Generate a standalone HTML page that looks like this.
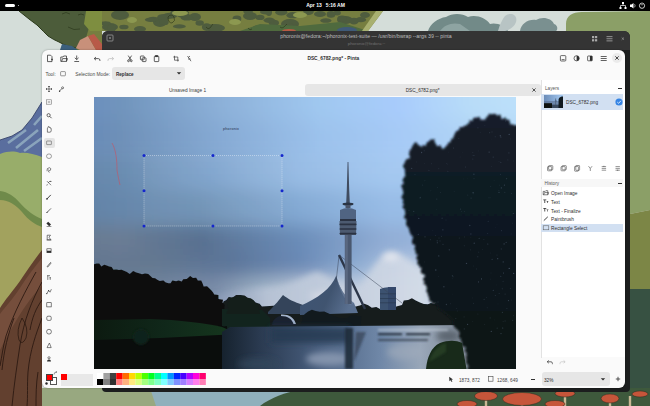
<!DOCTYPE html>
<html><head><meta charset="utf-8">
<style>
*{margin:0;padding:0;box-sizing:border-box}
html,body{width:650px;height:406px;overflow:hidden;background:#d3dcd8}
body{position:relative;font-family:"Liberation Sans",sans-serif;color:#2e2e2e}
.a{position:absolute}
svg{display:block}
.t{position:absolute;white-space:nowrap;line-height:1}
</style></head><body>
<!-- WALLPAPER -->
<svg class="a" style="left:0;top:0" width="650" height="406" viewBox="0 0 650 406">
<defs><filter id="wb"><feGaussianBlur stdDeviation="0.5"/></filter></defs>
<rect width="650" height="406" fill="#d4ddd9"/>
<path d="M20 11 L383 11 L368 31 L102 31 L102 50 L70 50 Z" fill="#767e40"/>
<ellipse cx="120" cy="15" rx="9" ry="5" fill="#4e5c3e"/>
<ellipse cx="110" cy="27" rx="8" ry="4" fill="#4e5c3e"/>
<ellipse cx="160" cy="22" rx="7" ry="5" fill="#4e5c3e"/>
<ellipse cx="195" cy="17" rx="6" ry="4" fill="#4e5c3e"/>
<ellipse cx="215" cy="28" rx="10" ry="4" fill="#4e5c3e"/>
<ellipse cx="250" cy="16" rx="7" ry="4" fill="#4e5c3e"/>
<ellipse cx="290" cy="24" rx="9" ry="5" fill="#4e5c3e"/>
<ellipse cx="320" cy="14" rx="6" ry="3" fill="#4e5c3e"/>
<ellipse cx="345" cy="20" rx="8" ry="4" fill="#4e5c3e"/>
<ellipse cx="365" cy="15" rx="5" ry="3" fill="#4e5c3e"/>
<ellipse cx="140" cy="29" rx="6" ry="3" fill="#4e5c3e"/>
<ellipse cx="270" cy="29" rx="10" ry="3" fill="#4e5c3e"/>
<ellipse cx="164.25044931481068" cy="21.884584505919037" rx="4.4798206661923174" ry="3.207840077192389" fill="#4e5c3e"/>
<ellipse cx="268.9444821091746" cy="12.310577184796262" rx="3.0526719662194965" ry="3.6749381641929197" fill="#4e5c3e"/>
<ellipse cx="170.02558386856208" cy="15.686619220933927" rx="6.982579342041851" ry="2.940527015044896" fill="#4e5c3e"/>
<ellipse cx="325.84459184408496" cy="20.527064173986698" rx="5.556272562176648" ry="2.301232848047048" fill="#4e5c3e"/>
<ellipse cx="271.4123777370009" cy="28.360906142865936" rx="5.092724841533205" ry="3.4825037124029805" fill="#4e5c3e"/>
<ellipse cx="281.28109834979" cy="12.280628764539946" rx="6.032920985147269" ry="3.1821991658626354" fill="#4e5c3e"/>
<ellipse cx="181.34226806924232" cy="11.620235029395" rx="6.462108947915782" ry="2.9454981773309337" fill="#4e5c3e"/>
<ellipse cx="294.0824594977668" cy="28.576256005109634" rx="5.85651793444481" ry="3.842197335167749" fill="#4e5c3e"/>
<ellipse cx="206.64011908020086" cy="27.018175419704566" rx="4.7784842242030425" ry="3.871173443409042" fill="#4e5c3e"/>
<ellipse cx="337.29399829127124" cy="12.949086194617545" rx="3.5438754408026756" ry="2.4339738824662747" fill="#4e5c3e"/>
<ellipse cx="360.6796375025148" cy="19.723237332548585" rx="5.506593163467215" ry="2.6020523968510108" fill="#4e5c3e"/>
<ellipse cx="236.95560563384606" cy="18.71732517689805" rx="4.403641955080721" ry="3.1701482148107267" fill="#4e5c3e"/>
<ellipse cx="257.7479841019537" cy="29.0840354169555" rx="5.727928546539866" ry="3.857891202400034" fill="#4e5c3e"/>
<ellipse cx="331.22815292712403" cy="30.819792897376303" rx="5.685094168650073" ry="2.3261992439421393" fill="#4e5c3e"/>
<ellipse cx="332.37213394139246" cy="30.292658946181227" rx="6.618783938048947" ry="3.1382150069486467" fill="#4e5c3e"/>
<ellipse cx="292.7305954470338" cy="15.222499673511965" rx="6.326431721093417" ry="3.1470647047025695" fill="#4e5c3e"/>
<ellipse cx="176.9385147362754" cy="12.269211542904587" rx="6.41576995369072" ry="3.9796120298431625" fill="#4e5c3e"/>
<ellipse cx="123.89988513962666" cy="27.011906425150038" rx="4.641847309383635" ry="2.301530748905619" fill="#4e5c3e"/>
<ellipse cx="179.3506366411468" cy="26.375837745546892" rx="6.491068098512805" ry="2.0883801222590868" fill="#4e5c3e"/>
<ellipse cx="265.92378270358836" cy="11.898804869920724" rx="5.873761909794065" ry="2.661908292038015" fill="#4e5c3e"/>
<ellipse cx="337.8444329567867" cy="30.612715136866793" rx="5.021681494592176" ry="3.997017890751553" fill="#4e5c3e"/>
<ellipse cx="183.61091443861153" cy="12.539414094108238" rx="5.399051235186403" ry="2.0627555243506355" fill="#4e5c3e"/>
<ellipse cx="153.29391123567325" cy="19.158722712339816" rx="5.441868491869366" ry="2.3123979820271297" fill="#4e5c3e"/>
<ellipse cx="111.45767267472513" cy="28.355580678554446" rx="4.255322079664367" ry="3.9173188528169103" fill="#4e5c3e"/>
<ellipse cx="342.09810318545243" cy="18.555784788243653" rx="4.841638531383619" ry="3.0401459691851276" fill="#4e5c3e"/>
<ellipse cx="273.8499539646863" cy="22.91300476803941" rx="5.2370442480615615" ry="3.240252270890524" fill="#4e5c3e"/>
<ellipse cx="353.9677389644701" cy="21.140536318913195" rx="4.724766213723731" ry="3.4406225042882768" fill="#4e5c3e"/>
<ellipse cx="164.1616172554917" cy="17.021737223482987" rx="6.911189265794541" ry="3.0422545865624118" fill="#4e5c3e"/>
<ellipse cx="248.0762262754528" cy="11.229149727284382" rx="4.6608413752155275" ry="3.159930427594131" fill="#4e5c3e"/>
<ellipse cx="105.41428038224183" cy="23.315958826125133" rx="5.528722141184462" ry="2.120161021255446" fill="#4e5c3e"/>
<ellipse cx="269.3820994329581" cy="20.325008593934157" rx="5.717125592152435" ry="2.7051539660820945" fill="#4e5c3e"/>
<ellipse cx="290.8765673287927" cy="25.760685785040685" rx="3.0887298759632396" ry="2.1211536072915944" fill="#4e5c3e"/>
<ellipse cx="282.5254835615917" cy="30.266111607725147" rx="4.00448911273388" ry="2.9126242592727585" fill="#4e5c3e"/>
<ellipse cx="260.0214064299521" cy="17.40050771496013" rx="4.455820357359828" ry="2.6253413223938216" fill="#4e5c3e"/>
<ellipse cx="199.6715733247776" cy="22.91243011715073" rx="4.201615893462357" ry="2.7543206826578337" fill="#4e5c3e"/>
<ellipse cx="308.51382135991264" cy="11.538424100186601" rx="5.277032008282329" ry="3.4703463633570193" fill="#4e5c3e"/>
<ellipse cx="183.7045077607251" cy="15.450756855863819" rx="6.215230681579653" ry="2.477390353795684" fill="#4e5c3e"/>
<ellipse cx="150.59647204784432" cy="19.70468641065642" rx="5.7922656266993995" ry="2.203683385263743" fill="#4e5c3e"/>
<ellipse cx="186.9308158477414" cy="17.675073008973506" rx="6.334155566229235" ry="2.876861465122774" fill="#4e5c3e"/>
<ellipse cx="330.99450237591935" cy="14.385684651128699" rx="4.346840940179523" ry="3.3004647525849897" fill="#4e5c3e"/>
<ellipse cx="180" cy="13" rx="8" ry="3" fill="#8c9850"/>
<ellipse cx="235" cy="22" rx="6" ry="3" fill="#8c9850"/>
<ellipse cx="300" cy="15" rx="7" ry="3" fill="#8c9850"/>
<ellipse cx="132" cy="20" rx="5" ry="3" fill="#8c9850"/>
<path d="M240 31 L260 24 L300 26 L340 22 L368 31 Z" fill="#4f6a3e"/>
<ellipse cx="347" cy="30" rx="10" ry="3" fill="#3f5a78"/>
<ellipse cx="289" cy="31" rx="7" ry="2" fill="#b85a44"/>
<path d="M376 11 L383 11 L368 31 L362 31 Z" fill="#a8b070"/>
<path d="M168 17 q3 -4 6 0 q2 4 -2 6 q-4 0 -4 -6" fill="none" stroke="#2a3418" stroke-width="0.6"/>
<path d="M206 27 q2 3 4 1 q2 -3 3 -4 M248 28 q2 3 4 1 M280 27 q2 2 4 0 q2 -2 3 -3" fill="none" stroke="#2a3418" stroke-width="0.6"/>
<path d="M19 11 Q30 20 37 25 Q44 32 48 36 Q54 40 59 42 Q64 45 68 46 L76 48 L86 38 L90 24 L88 11 Z" fill="#4c5c3a"/>
<path d="M19 11 Q30 20 37 25 Q44 32 48 36 Q54 40 59 42 Q64 45 68 46 L76 48" fill="none" stroke="#2c3a1c" stroke-width="1"/>
<path d="M68 27 q6 4 12 2 M62 14 q4 -3 8 0 M78 15 q3 -2 6 0" fill="none" stroke="#2c3a1c" stroke-width="0.7"/>
<path d="M86 11 L102 11 L102 31 L90 31 L84 24 Z" fill="#7e8e40"/>
<path d="M76 48 L80 40 L88 36 L96 50 L80 50 Z" fill="#c8907a"/>
<path d="M88 36 L94 34 L102 44 L102 50 L96 50 Z" fill="#b85a48"/>
<path d="M60 50 L62 44 L72 46 L78 50 Z" fill="#3b5f7c"/>
<path d="M428 31 C430 24 438 18 446 17 C452 13 462 13 468 17 C476 14 486 18 490 24 C496 22 506 26 508 31 Z" fill="#728a88"/>
<path d="M440 31 C444 25 452 22 460 24 L470 31 Z" fill="#8ea4a2"/>
<path d="M520 31 C521 24 528 19 536 20 C542 16 552 18 554 24 C558 25 558 30 556 31 Z" fill="#7a9090"/>
<path d="M505 16 C510 12 518 14 516 22 C514 28 508 30 505 31 L498 31 C500 24 502 20 505 16 Z" fill="#b8c4c4"/>
<path d="M566 31 L566 24 C566 16 572 12 582 12 L650 11 L650 210 L625 215 L625 31 Z" fill="#8b9f67"/>
<path d="M625 215 L650 210 L650 291 L625 291 Z" fill="#7c8646"/>
<path d="M625 289 L650 289 L650 406 L625 406 Z" fill="#375142"/>
<path d="M0 140 L12 136 L22 130 L32 118 L42 102 L42 160 L0 160 Z" fill="#5a6e9e"/>
<path d="M8 143 L26 130 M16 148 L38 130 M24 151 L42 138 M34 125 L42 116" stroke="#8aa4bc" stroke-width="2.6" fill="none"/>
<path d="M0 140 L12 136 L22 130 L32 118 L42 102" stroke="#2e3a60" stroke-width="0.8" fill="none"/>
<path d="M0 154 C8 151 14 151 20 153 C26 152 34 154 42 157 L42 232 L0 232 Z" fill="#98ad6a"/>
<path d="M0 191 C8 192 14 196 20 203 C26 210 34 216 42 219 L42 232 L0 232 Z" fill="#6f8a4a"/>
<path d="M0 200 C9 200 16 205 22 212 C28 220 36 225 42 227 L42 330 L0 330 Z" fill="#a2a25e"/>
<path d="M42 250 C34 260 26 272 20 281 C12 292 5 300 0 308 L0 406 L42 406 Z" fill="#62402f"/>
<path d="M42 258 C34 268 26 278 20 288 C12 300 6 306 0 314 L0 350 C10 330 24 305 42 285 Z" fill="#7e5442" opacity="0.7"/>
<path d="M36 272 C26 290 14 312 6 336 C3 346 2 356 0 366 M42 282 C32 300 24 320 20 345 C17 365 14 385 12 406 M42 318 C36 334 30 350 28 372 C27 386 28 396 27 406 M38 372 C36 384 36 396 36 406 M14 318 C8 334 4 350 2 370 M42 300 C36 308 32 318 30 330" stroke="#2c1a12" stroke-width="0.9" fill="none"/>
<path d="M22 318 q-6 12 -3 22 q3 6 7 -2 q3 -10 -4 -20" stroke="#2c1a12" stroke-width="0.8" fill="none"/>
<path d="M42 388 L170 388 L156 406 L42 406 Z" fill="#98a880"/>
<path d="M150 388 L310 388 C292 392 272 398 262 406 L156 406 Z" fill="#90b0bc"/>
<path d="M300 390 L650 388 L650 406 L260 406 C270 398 286 392 300 390 Z" fill="#3e593c"/>
<rect x="484.8" y="398" width="2.4" height="10" fill="#c9b894"/>
<rect x="520.8" y="404" width="2.4" height="10" fill="#c9b894"/>
<rect x="563.8" y="396" width="2.4" height="10" fill="#c9b894"/>
<rect x="608.8" y="402" width="2.4" height="10" fill="#c9b894"/>
<rect x="628.8" y="396" width="2.4" height="10" fill="#c9b894"/>
<ellipse cx="486" cy="396" rx="11.5" ry="4.5" fill="#c6553a" stroke="#2a2a20" stroke-width="0.5"/>
<ellipse cx="522" cy="399" rx="19.5" ry="6.5" fill="#c6553a" stroke="#2a2a20" stroke-width="0.5"/>
<ellipse cx="565" cy="393.5" rx="10" ry="3.5" fill="#c6553a" stroke="#2a2a20" stroke-width="0.5"/>
<ellipse cx="610" cy="398.5" rx="9" ry="4.5" fill="#c6553a" stroke="#2a2a20" stroke-width="0.5"/>
<ellipse cx="467" cy="404" rx="10" ry="3.5" fill="#c6553a" stroke="#2a2a20" stroke-width="0.5"/>
<ellipse cx="555" cy="404" rx="10" ry="3.5" fill="#c6553a" stroke="#2a2a20" stroke-width="0.5"/>
<ellipse cx="640" cy="394" rx="8" ry="3" fill="#c6553a" stroke="#2a2a20" stroke-width="0.5"/>
<path d="M614 391 q4 -6 10 -4" stroke="#2a3a28" stroke-width="0.8" fill="none"/>
</svg>
<!-- TOP BAR -->
<div class="a" style="left:0;top:0;width:650px;height:11px;background:#000"></div>
<!-- TERMINAL WINDOW -->
<div class="a" style="left:102px;top:31px;width:528px;height:361px;background:#1c1e1e;border-radius:6px 6px 4px 4px"></div>
<div class="a" style="left:102px;top:31px;width:528px;height:19px;background:#343434;border-radius:6px 6px 0 0"></div>
<!-- PINTA WINDOW -->
<div class="a" style="left:42px;top:50px;width:583px;height:338px;background:#fafafa;border-radius:6px;box-shadow:0 0 2px rgba(0,0,0,0.35)"></div>
<!-- PHOTO -->
<svg class="a" style="left:94px;top:97px" width="422" height="272" viewBox="0 0 422 272">
<defs><linearGradient id="g0" gradientUnits="userSpaceOnUse" x1="0" y1="0" x2="422" y2="0"><stop offset="0.000" stop-color="#6c90be"/><stop offset="0.062" stop-color="#7094bc"/><stop offset="0.299" stop-color="#8cb0d8"/><stop offset="0.536" stop-color="#a0c8f0"/><stop offset="0.725" stop-color="#a8ccfc"/><stop offset="0.891" stop-color="#b8dcf8"/><stop offset="1.000" stop-color="#bce0fa"/></linearGradient><linearGradient id="g1" gradientUnits="userSpaceOnUse" x1="0" y1="0" x2="422" y2="0"><stop offset="0.000" stop-color="#6a8cb8"/><stop offset="0.062" stop-color="#6e90b8"/><stop offset="0.299" stop-color="#86aad4"/><stop offset="0.536" stop-color="#9cc2ec"/><stop offset="0.725" stop-color="#a6caf6"/><stop offset="0.891" stop-color="#b0d4f6"/><stop offset="1.000" stop-color="#b4d8f8"/></linearGradient><linearGradient id="g2" gradientUnits="userSpaceOnUse" x1="0" y1="0" x2="422" y2="0"><stop offset="0.000" stop-color="#6688ac"/><stop offset="0.062" stop-color="#6a8cb0"/><stop offset="0.275" stop-color="#7ca2cc"/><stop offset="0.488" stop-color="#98bce4"/><stop offset="0.701" stop-color="#a4c8f0"/><stop offset="1.000" stop-color="#a8ccf2"/></linearGradient><linearGradient id="g3" gradientUnits="userSpaceOnUse" x1="0" y1="0" x2="422" y2="0"><stop offset="0.000" stop-color="#6484a8"/><stop offset="0.251" stop-color="#6c90b4"/><stop offset="0.488" stop-color="#84aad4"/><stop offset="0.701" stop-color="#98bce6"/><stop offset="1.000" stop-color="#9cc0e8"/></linearGradient><linearGradient id="g4" gradientUnits="userSpaceOnUse" x1="0" y1="0" x2="422" y2="0"><stop offset="0.000" stop-color="#687a92"/><stop offset="0.062" stop-color="#6a7c94"/><stop offset="0.251" stop-color="#587090"/><stop offset="0.488" stop-color="#6a8cb8"/><stop offset="0.690" stop-color="#90acd4"/><stop offset="0.796" stop-color="#98b4dc"/><stop offset="1.000" stop-color="#98b4dc"/></linearGradient><linearGradient id="g5" gradientUnits="userSpaceOnUse" x1="0" y1="0" x2="422" y2="0"><stop offset="0.000" stop-color="#627690"/><stop offset="0.133" stop-color="#647890"/><stop offset="0.322" stop-color="#5a7498"/><stop offset="0.488" stop-color="#6a88b4"/><stop offset="0.607" stop-color="#88a8d0"/><stop offset="0.725" stop-color="#b0c4e0"/><stop offset="1.000" stop-color="#b8cae2"/></linearGradient><linearGradient id="g6" gradientUnits="userSpaceOnUse" x1="0" y1="0" x2="422" y2="0"><stop offset="0.000" stop-color="#647890"/><stop offset="0.284" stop-color="#7a8ca8"/><stop offset="0.393" stop-color="#9cb0c4"/><stop offset="0.488" stop-color="#b8c6d8"/><stop offset="0.725" stop-color="#c8d4e4"/><stop offset="1.000" stop-color="#d0dcea"/></linearGradient><filter id="vb" x="-10%" y="-30%" width="120%" height="160%"><feGaussianBlur stdDeviation="3 9"/></filter><filter id="b6" x="-50%" y="-50%" width="200%" height="200%"><feGaussianBlur stdDeviation="6"/></filter><filter id="b3" x="-50%" y="-50%" width="200%" height="200%"><feGaussianBlur stdDeviation="3"/></filter><filter id="b1" x="-20%" y="-20%" width="140%" height="140%"><feGaussianBlur stdDeviation="1"/></filter><filter id="b04"><feGaussianBlur stdDeviation="0.35"/></filter><linearGradient id="water" x1="0" y1="0" x2="0" y2="1">
      <stop offset="0" stop-color="#4a5a70"/>
      <stop offset="0.4" stop-color="#7888a0"/>
      <stop offset="0.75" stop-color="#8898b0"/>
      <stop offset="1" stop-color="#6a7e98"/>
    </linearGradient></defs>
<g filter="url(#vb)">
<rect x="-20" y="-57.0" width="462" height="80.0" fill="url(#g0)"/>
<rect x="-20" y="23.0" width="462" height="37.5" fill="url(#g1)"/>
<rect x="-20" y="60.5" width="462" height="32.5" fill="url(#g2)"/>
<rect x="-20" y="93.0" width="462" height="35.0" fill="url(#g3)"/>
<rect x="-20" y="128.0" width="462" height="30.0" fill="url(#g4)"/>
<rect x="-20" y="158.0" width="462" height="22.5" fill="url(#g5)"/>
<rect x="-20" y="180.5" width="462" height="92.5" fill="url(#g6)"/>
</g>
<defs><linearGradient id="cl" x1="0" y1="0" x2="1" y2="0"><stop offset="0" stop-color="#7a8cac"/><stop offset="0.3" stop-color="#b8c4d6"/><stop offset="1" stop-color="#d4dce8"/></linearGradient></defs>
<path d="M106.0 203.0 C126.0 195.0 156.0 191.0 186.0 189.0 C206.0 185.0 216.0 175.0 224.0 175.0 C234.0 179.0 246.0 189.0 266.0 190.0 C274.0 179.0 282.0 161.0 294.0 155.0 C306.0 153.0 316.0 165.0 331.0 173.0 L331.0 218.0 L106.0 218.0 Z" fill="url(#cl)" filter="url(#b3)" opacity="0.92"/>
<g filter="url(#b3)">
<ellipse cx="297" cy="160" rx="8" ry="4" fill="#e4e8f0" opacity="0.9"/>
<ellipse cx="236" cy="199" rx="20" ry="5" fill="#d8dce6" opacity="0.8"/>
</g>
<path d="M128.6 233.0 L128.8 229.9 L129.0 226.8 L129.5 223.7 L130.5 220.7 L128.5 217.4 L128.2 214.2 L129.0 211.2 L128.5 208.0 L129.5 204.4 L132.4 202.9 L134.7 199.9 L138.7 200.6 L142.1 198.1 L146.2 198.0 L150.5 198.5 L153.2 200.4 L156.2 201.5 L159.2 203.1 L161.5 205.6 L165.6 206.8 L167.9 209.4 L172.0 209.2 L176.0 209.1 L179.4 208.7 L182.8 208.6 L186.0 208.2 L189.3 209.4 L192.7 207.9 L196.0 208.1 L199.3 208.9 L202.7 208.3 L206.0 210.3 L209.1 208.3 L212.2 210.2 L215.3 211.0 L218.4 210.4 L221.6 210.0 L224.7 210.0 L227.8 209.4 L230.9 208.0 L234.0 208.6 L237.1 210.7 L240.2 210.4 L243.3 210.8 L246.4 210.5 L249.6 210.7 L252.7 210.5 L255.8 209.7 L258.9 209.8 L261.9 209.4 L265.9 208.5 L270.3 206.7 L274.2 208.2 L277.8 210.7 L282.3 210.0 L286.0 212.0 L289.0 211.5 L292.1 212.4 L295.1 211.8 L298.0 210.5 L301.0 210.0 L303.2 209.2 L308.0 208.0 L309.8 203.4 L314.2 203.1 L317.9 201.3 L321.7 203.6 L325.9 205.4 L329.8 206.9 L334.0 207.3 L336.9 205.9 L340.1 206.7 L343.0 205.2 L345.9 205.6 L349.0 205.7 L351.9 206.5 L355.1 205.9 L357.9 206.2 L361.5 206.3 L364.9 205.5 L368.5 206.9 L371.8 206.4 L375.8 206.2 L378.4 209.3 L382.8 210.0 L382.9 213.3 L381.3 216.6 L382.3 219.9 L381.8 223.1 L381.6 226.4 L382.5 229.7 L382.0 232.8 L379.0 234.2 L376.0 233.7 L372.9 233.8 L369.9 234.7 L366.9 234.1 L363.9 232.8 L360.8 231.7 L357.8 232.6 L354.8 233.1 L351.8 234.7 L348.7 235.3 L345.7 235.0 L342.7 233.0 L339.7 231.7 L336.6 233.0 L333.6 233.3 L330.6 233.0 L327.6 232.9 L324.5 233.0 L321.5 232.1 L318.5 233.2 L315.5 232.4 L312.5 234.0 L309.4 233.5 L306.4 234.4 L303.4 232.0 L300.4 232.1 L297.3 232.3 L294.3 232.7 L291.3 231.5 L288.3 231.0 L285.2 234.0 L282.2 232.2 L279.2 231.9 L276.2 232.4 L273.1 232.6 L270.1 231.9 L267.1 231.6 L264.1 232.7 L261.0 231.4 L258.0 232.2 L255.0 233.1 L252.0 234.1 L249.0 233.1 L245.9 233.4 L242.9 233.1 L239.9 232.5 L236.9 233.3 L233.8 231.8 L230.8 232.7 L227.8 233.6 L224.8 234.8 L221.7 233.0 L218.7 232.5 L215.7 233.5 L212.7 234.0 L209.6 234.1 L206.6 232.6 L203.6 231.0 L200.6 232.3 L197.5 231.4 L194.5 233.0 L191.5 232.4 L188.5 232.0 L185.5 233.1 L182.4 234.1 L179.4 233.7 L176.4 234.4 L173.4 233.7 L170.3 234.8 L167.3 232.3 L164.3 233.3 L161.3 231.9 L158.2 232.1 L155.2 233.0 L152.2 232.6 L149.2 232.4 L146.1 231.7 L143.1 233.4 L140.1 233.5 L137.1 234.3 L134.0 234.0 L131.0 233.6 L128.0 233.0 Z" fill="#121a1e" filter="url(#b04)"/>
<path d="M174.0 215.0 C181.0 208.0 186.0 202.0 189.0 198.0 C194.0 202.0 200.0 205.0 209.0 208.0 L209.0 217.0 L174.0 217.0 Z" fill="#34445a"/>
<defs><linearGradient id="tent" x1="0" y1="0" x2="1" y2="0.3"><stop offset="0" stop-color="#3e5474"/><stop offset="0.6" stop-color="#405470"/><stop offset="1" stop-color="#5a7090"/></linearGradient></defs>
<path d="M206.0 209.0 C224.0 201.0 237.0 192.0 242.3 178.5 C245.0 191.0 251.0 200.0 260.0 206.0 L264.0 216.0 L206.0 218.0 Z" fill="url(#tent)"/>
<path d="M242.3 178.5 C245.0 191.0 251.0 200.0 260.0 206.0 L256.0 208.0 C250.0 201.0 245.0 193.0 242.3 178.5 Z" fill="#7a8ca8" opacity="0.5"/>
<path d="M204.3 233.1 L204.5 229.3 L207.0 226.3 L208.5 222.9 L208.3 219.4 L211.2 216.7 L214.1 214.5 L217.9 212.8 L221.7 214.1 L225.8 214.8 L230.3 214.6 L233.6 216.1 L236.4 217.2 L239.4 219.1 L242.7 220.0 L246.0 220.9 L249.2 221.0 L252.4 221.4 L255.4 219.3 L258.4 218.2 L261.6 218.4 L264.9 219.5 L267.2 219.0 L267.1 222.5 L266.9 226.0 L267.6 229.5 L268.0 233.0 Z" fill="#121a1e"/>
<path d="M178.0 228.0 C179.0 216.0 200.0 215.0 202.0 228.0 Z" fill="#1a2230"/>
<path d="M187.0 217.5 C194.0 217.0 200.0 220.0 202.0 227.0 L199.5 227.0 C198.0 222.0 194.0 219.0 187.0 219.0 Z" fill="#a4b4cc"/>
<path d="M286.0 192.0 Q294.0 188.5 302.0 192.0 L302.0 213.0 L286.0 213.0 Z" fill="#3c5270"/>
<rect x="294" y="190" width="8" height="23" fill="#34486a"/>
<rect x="286" y="196.5" width="16" height="0.7" fill="#26344a" opacity="0.8"/>
<rect x="286" y="201" width="16" height="0.7" fill="#26344a" opacity="0.8"/>
<rect x="286" y="205.5" width="16" height="0.7" fill="#26344a" opacity="0.8"/>
<path d="M245.0 158.0 L271.0 212.0" stroke="#2c3648" stroke-width="2.4" fill="none"/>
<path d="M245.0 158.0 L308.0 206.0 M245.0 159.0 L242.0 185.0" stroke="#3a4458" stroke-width="0.5" fill="none"/>
<rect x="250.8" y="137" width="6.8" height="70" fill="#4a5870"/>
<rect x="251.2" y="137" width="2.6" height="70" fill="#5a6880"/>
<path d="M253.6 65.0 L254.4 65.0 L255.2 93.0 L255.8 106.0 L252.2 106.0 L252.8 93.0 Z" fill="#404c60"/>
<ellipse cx="254" cy="107" rx="5.5" ry="1.5" fill="#2a3444"/>
<rect x="251.5" y="108" width="5" height="3" fill="#4a5468"/>
<path d="M246.0 113.0 Q254.0 109.0 262.0 113.0 L262.0 122.0 Q254.0 123.0 246.0 122.0 Z" fill="#506482"/>
<rect x="246" y="122" width="16" height="2" fill="#2a3242"/>
<path d="M245.5 124.0 L262.5 124.0 L262.0 138.0 L246.0 138.0 Z" fill="#4c5a70"/>
<rect x="245.5" y="126.6" width="17" height="1.6" rx="0.8" fill="#2a3242"/>
<rect x="245.5" y="131.2" width="17" height="1.6" rx="0.8" fill="#2a3242"/>
<rect x="245.5" y="135.8" width="17" height="1.6" rx="0.8" fill="#2a3242"/>
<path d="M0.1 167.2 L2.7 166.4 L5.2 166.5 L7.4 169.6 L10.2 167.8 L12.7 168.4 L15.1 169.6 L17.6 169.9 L19.5 172.7 L22.3 172.4 L24.9 172.9 L27.6 172.8 L30.0 173.7 L32.9 175.0 L35.7 176.9 L39.2 174.1 L42.1 175.5 L45.0 176.2 L48.0 177.2 L51.1 176.6 L54.3 177.0 L56.4 179.1 L58.5 181.1 L61.2 181.2 L63.2 182.7 L65.8 184.0 L69.4 183.5 L71.8 185.5 L74.4 186.3 L76.5 186.2 L78.4 183.6 L82.1 184.2 L84.6 183.6 L87.7 184.5 L89.2 182.3 L92.7 182.0 L96.2 178.9 L98.9 181.0 L102.2 180.7 L103.8 183.4 L107.2 183.6 L108.6 186.5 L109.6 189.4 L113.0 189.3 L114.9 191.1 L117.0 193.1 L118.9 195.3 L120.3 197.5 L124.4 198.0 L124.5 201.9 L129.0 202.7 L128.5 205.6 L130.4 207.7 L130.2 210.5 L130.3 213.1 L129.1 215.7 L130.9 218.1 L133.2 220.4 L133.2 223.0 L131.0 225.5 L131.0 228.0 L130.5 230.5 L132.0 234.4 L129.5 234.9 L127.0 234.3 L124.4 233.1 L121.9 232.3 L119.4 233.3 L116.9 234.5 L114.4 233.4 L111.9 231.6 L109.3 234.0 L106.8 233.2 L104.3 234.1 L101.8 234.3 L99.3 233.3 L96.8 232.3 L94.2 233.8 L91.7 233.3 L89.2 233.4 L86.7 231.7 L84.2 231.8 L81.7 232.6 L79.1 233.5 L76.6 232.8 L74.1 234.1 L71.6 233.3 L69.1 234.4 L66.6 235.8 L64.0 234.1 L61.5 233.0 L59.0 234.1 L56.5 234.5 L54.0 233.8 L51.4 234.7 L48.9 234.2 L46.4 234.5 L43.9 234.3 L41.4 231.4 L38.9 232.5 L36.3 232.0 L33.8 232.1 L31.3 232.4 L28.8 230.9 L26.3 231.1 L23.8 230.6 L21.2 231.9 L18.7 233.0 L16.2 232.8 L13.7 230.8 L11.2 231.1 L8.7 231.4 L6.1 230.8 L3.6 232.0 L1.1 232.7 L-1.4 234.0 L-3.9 234.0 L-6.4 234.8 L-9.0 232.8 L-11.5 233.6 L-16.5 233.0 L-15.0 230.5 L-15.1 227.9 L-13.8 225.4 L-13.6 222.8 L-15.1 220.3 L-13.8 217.8 L-12.7 215.2 L-14.8 212.7 L-16.7 210.2 L-14.9 207.6 L-16.2 205.1 L-14.5 202.5 L-15.9 200.0 L-14.3 197.5 L-13.1 194.9 L-13.0 192.4 L-15.1 189.8 L-12.8 187.3 L-13.3 184.8 L-13.8 182.2 L-12.8 179.7 L-14.9 177.2 L-14.9 174.6 L-15.1 172.1 L-14.6 169.5 L-14.0 167.0 Z" fill="#0e1110" filter="url(#b04)"/>
<path d="M128.0 212.0 L168.0 213.0 L176.0 221.0 L176.0 235.0 L128.0 239.0 Z" fill="#12241e"/>
<path d="M132.2 217.0 L132.9 214.5 L134.4 212.0 L133.6 209.3 L133.3 206.5 L134.7 204.9 L136.5 202.1 L139.0 199.9 L142.6 200.3 L146.0 198.7 L148.7 198.9 L151.3 199.6 L153.4 201.2 L157.1 201.4 L159.5 203.5 L161.8 206.2 L164.5 208.1 L164.6 211.1 L165.5 214.0 L166.0 217.0 Z" fill="#141e1a"/>
<path d="M0.0 229.0 L4.0 228.4 L8.0 228.6 L12.0 229.3 L16.0 228.7 L20.0 229.8 L24.0 229.7 L28.0 229.5 L32.0 227.9 L36.0 228.3 L40.0 229.6 L44.0 229.4 L48.0 229.7 L52.0 230.0 L56.0 229.3 L60.2 229.2 L64.3 229.0 L68.5 229.3 L72.7 227.9 L76.8 227.9 L81.0 229.1 L85.2 229.6 L89.3 228.8 L93.5 228.4 L97.7 227.6 L101.8 229.5 L106.0 228.5 L110.0 228.0 L114.0 229.1 L118.0 228.8 L122.0 229.6 L126.0 228.3 L130.0 229.6 L132.8 228.9 L133.5 233.0 L133.4 237.0 L132.8 241.0 L132.0 244.9 L131.3 248.9 L130.9 252.9 L132.2 257.3 L131.6 261.6 L130.5 265.8 L131.3 270.2 L130.5 274.4 L129.4 278.7 L130.0 282.9 L126.0 282.4 L122.0 282.3 L118.0 282.3 L114.0 282.4 L110.0 283.4 L106.0 283.6 L102.0 282.4 L98.0 283.7 L94.0 282.6 L90.0 283.7 L86.0 283.0 L82.0 283.5 L78.0 282.8 L74.0 282.7 L70.0 282.4 L66.0 282.5 L62.0 282.6 L58.0 282.5 L54.0 281.8 L50.0 282.9 L46.0 282.8 L42.0 283.4 L38.0 282.4 L34.0 282.3 L30.0 282.2 L26.0 282.5 L22.0 283.0 L18.0 283.7 L14.0 283.7 L10.0 282.4 L6.0 282.4 L2.0 283.2 L-2.0 282.3 L-6.0 282.7 L-10.0 282.9 L-13.1 283.0 L-14.2 278.8 L-14.5 274.7 L-15.0 270.5 L-14.2 266.4 L-15.0 262.2 L-14.4 258.1 L-14.7 253.9 L-14.4 249.8 L-14.5 245.6 L-13.6 241.5 L-14.9 237.3 L-14.6 233.2 L-14.0 229.0 Z" fill="#0a0d0c"/>
<defs><linearGradient id="grass" x1="0" y1="0" x2="1" y2="0"><stop offset="0" stop-color="#0c1a10"/><stop offset="0.5" stop-color="#10281a"/><stop offset="1" stop-color="#16381e"/></linearGradient></defs>
<path d="M0.0 223.0 L56.0 222.0 C86.0 223.0 111.0 226.0 128.0 230.0 L144.0 237.0 L66.0 241.0 L0.0 243.0 Z" fill="url(#grass)"/>
<ellipse cx="47" cy="240" rx="8" ry="8" fill="#11241a" filter="url(#b1)"/>
<defs><linearGradient id="wh" gradientUnits="userSpaceOnUse" x1="128" y1="0" x2="376" y2="0"><stop offset="0" stop-color="#16222e"/><stop offset="0.15" stop-color="#2a3a50"/><stop offset="0.4" stop-color="#4a6080"/><stop offset="0.64" stop-color="#7088a8"/><stop offset="0.8" stop-color="#98a6b8"/><stop offset="1" stop-color="#808a96"/></linearGradient></defs>
<path d="M128.0 235.0 L136.0 230.0 L376.0 228.0 L376.0 275.0 L128.0 275.0 Z" fill="url(#wh)"/>
<g filter="url(#b3)">
<ellipse cx="234" cy="262" rx="22" ry="7" fill="#8898b0" opacity="0.9"/>
<rect x="176" y="230" width="80" height="16" fill="#263a52" opacity="0.85"/>
<ellipse cx="164" cy="267" rx="20" ry="6" fill="#34485e" opacity="0.7"/>
<ellipse cx="311" cy="255" rx="18" ry="8" fill="#a0acbc" opacity="0.6"/>
<ellipse cx="354" cy="239" rx="12" ry="6" fill="#505862" opacity="0.8"/>
</g>
<g filter="url(#b1)">
<rect x="251" y="231" width="8" height="41" fill="#202c3c" opacity="0.9"/>
<path d="M262.0 235.0 L272.0 235.0 L260.0 265.0 Z" fill="#2c3648" opacity="0.6"/>
<rect x="284" y="232" width="70" height="1.6" fill="#c8d0dc" opacity="0.7"/>
<rect x="284" y="236" width="24" height="2.2" fill="#202836" opacity="0.85"/>
<rect x="312" y="236" width="24" height="2.2" fill="#202836" opacity="0.85"/>
<rect x="284" y="242" width="50" height="2" fill="#283040" opacity="0.7"/>
</g>
<defs><linearGradient id="treeg" x1="0" y1="0" x2="0" y2="1"><stop offset="0" stop-color="#131e2a"/><stop offset="0.35" stop-color="#111a22"/><stop offset="1" stop-color="#0f1414"/></linearGradient></defs>
<path d="M422.3 28.3 L420.4 28.2 L418.8 27.2 L416.6 27.4 L415.9 25.7 L415.8 23.4 L414.2 22.6 L412.0 22.4 L411.5 19.9 L408.8 21.9 L407.2 21.5 L406.8 18.2 L405.4 17.5 L403.1 18.7 L402.0 17.1 L400.2 16.7 L398.6 17.0 L397.0 17.3 L395.1 16.5 L394.0 19.0 L392.4 20.1 L391.2 22.6 L389.4 22.7 L386.4 22.4 L385.6 19.7 L383.6 19.9 L383.5 20.8 L380.7 20.5 L379.0 21.5 L378.4 23.9 L375.1 23.1 L375.6 26.1 L373.6 26.6 L372.7 28.2 L370.7 28.5 L369.0 30.0 L365.7 29.9 L365.5 32.3 L363.8 33.5 L361.9 34.4 L361.2 35.8 L360.3 37.8 L359.5 39.7 L358.8 41.9 L357.1 41.6 L356.9 43.4 L356.3 45.1 L353.8 45.9 L353.7 47.8 L351.9 48.9 L351.0 50.4 L349.7 51.5 L348.3 51.7 L347.3 50.2 L346.8 48.2 L343.3 49.2 L342.3 47.7 L341.5 46.1 L340.4 44.8 L340.8 42.0 L337.6 42.8 L338.1 42.1 L336.2 42.7 L335.2 44.2 L333.5 45.0 L332.3 46.3 L332.0 48.7 L328.8 48.1 L327.6 50.4 L326.8 48.9 L325.1 48.4 L323.9 47.5 L322.1 45.1 L320.4 45.9 L319.4 47.4 L318.4 48.9 L317.6 50.8 L316.9 52.4 L315.3 53.6 L315.6 55.6 L314.6 57.0 L316.0 59.4 L315.8 61.3 L312.7 61.9 L311.6 63.5 L310.8 65.1 L310.3 66.8 L308.8 68.7 L309.4 70.4 L310.9 72.3 L310.7 73.9 L311.0 75.6 L310.9 77.3 L311.5 79.1 L309.6 80.4 L309.2 82.0 L308.2 83.6 L309.6 85.2 L309.6 86.8 L307.0 88.5 L307.5 90.1 L308.7 91.7 L308.5 93.3 L309.5 94.9 L309.2 96.5 L308.4 98.2 L307.4 99.8 L307.8 101.4 L309.6 103.0 L308.6 104.7 L308.8 106.3 L310.2 107.9 L308.1 109.6 L309.2 111.2 L310.9 112.7 L310.9 114.4 L311.3 116.0 L311.2 117.6 L310.3 119.3 L309.7 121.1 L312.1 122.0 L312.4 123.6 L312.1 125.6 L312.0 127.5 L312.8 129.0 L314.1 130.3 L315.1 131.7 L315.1 133.6 L315.7 135.1 L316.3 136.7 L317.1 138.3 L318.9 139.5 L318.7 141.4 L318.0 143.4 L318.0 145.2 L318.2 147.0 L321.0 147.9 L321.2 149.6 L320.4 151.7 L321.0 153.3 L321.9 154.8 L321.3 156.8 L324.0 157.8 L322.4 160.0 L322.3 161.8 L323.8 163.2 L323.4 165.1 L323.1 167.0 L325.4 168.2 L324.9 170.1 L327.8 171.1 L326.9 173.1 L326.8 174.9 L327.5 176.5 L330.0 177.6 L331.4 179.0 L329.1 181.5 L329.0 183.2 L330.8 184.6 L329.2 186.8 L331.9 188.0 L332.3 189.7 L333.1 191.3 L332.2 193.4 L332.6 195.2 L334.0 196.6 L333.8 198.7 L335.1 200.2 L335.1 202.3 L335.5 204.2 L337.9 205.1 L338.1 207.5 L341.1 206.4 L342.1 207.7 L343.6 208.4 L344.2 210.3 L344.4 212.7 L346.1 212.7 L347.6 213.8 L349.7 214.4 L350.2 216.3 L352.5 216.7 L352.9 218.6 L355.3 219.0 L356.0 220.7 L357.5 222.2 L359.5 223.1 L358.7 225.4 L358.9 227.2 L359.9 228.5 L360.0 230.4 L362.1 231.2 L362.7 232.8 L364.2 233.4 L365.1 234.8 L365.7 236.4 L364.7 239.2 L365.2 241.0 L367.2 241.5 L366.4 243.5 L368.0 244.9 L367.6 246.9 L367.3 248.9 L370.7 249.7 L372.3 251.1 L370.6 253.6 L371.8 255.0 L373.1 256.6 L372.6 258.3 L372.3 259.9 L372.2 261.6 L372.7 263.2 L371.8 264.9 L372.9 266.5 L373.9 268.1 L374.7 269.7 L373.0 271.5 L374.2 273.1 L374.9 274.7 L372.5 276.5 L374.6 278.0 L373.2 279.7 L374.1 281.3 L374.0 283.2 L375.6 283.2 L377.3 282.6 L378.9 281.4 L380.5 283.2 L382.2 281.5 L383.8 281.6 L385.4 280.3 L387.1 283.6 L388.7 283.3 L390.3 282.2 L391.9 282.1 L393.6 283.8 L395.2 282.8 L396.8 283.7 L398.5 283.8 L400.1 284.4 L401.7 285.3 L403.4 283.3 L405.0 283.7 L406.6 283.9 L408.3 282.2 L409.9 282.9 L411.5 281.7 L413.2 281.6 L414.8 283.1 L416.4 281.9 L418.1 282.7 L419.7 283.3 L421.3 284.7 L422.9 284.5 L424.6 283.1 L426.2 284.5 L427.8 284.3 L429.5 284.7 L431.1 285.4 L432.7 285.4 L434.4 283.0 L437.8 283.0 L437.1 281.4 L436.1 279.8 L436.9 278.2 L437.1 276.6 L436.9 275.0 L438.3 273.4 L436.2 271.8 L436.0 270.2 L438.0 268.6 L436.8 267.0 L436.7 265.4 L438.1 263.8 L435.4 262.2 L436.1 260.6 L435.1 259.0 L433.3 257.4 L434.1 255.8 L436.4 254.2 L435.3 252.6 L435.6 251.0 L437.8 249.3 L438.3 247.7 L435.7 246.1 L437.5 244.5 L437.6 242.9 L437.5 241.3 L436.4 239.7 L436.4 238.1 L436.0 236.5 L436.0 234.9 L436.9 233.3 L437.3 231.7 L436.9 230.1 L437.5 228.5 L438.5 226.9 L436.1 225.3 L435.8 223.7 L435.3 222.1 L434.8 220.5 L436.2 218.9 L435.1 217.3 L435.2 215.7 L435.5 214.1 L435.5 212.5 L434.5 210.9 L434.1 209.3 L434.6 207.7 L433.8 206.1 L434.4 204.5 L436.8 202.9 L436.3 201.3 L436.2 199.7 L435.6 198.1 L434.5 196.5 L433.8 194.9 L433.6 193.3 L434.1 191.7 L433.3 190.1 L434.7 188.5 L436.8 186.9 L437.0 185.2 L438.5 183.6 L436.6 182.0 L437.8 180.4 L438.2 178.8 L437.9 177.2 L436.3 175.6 L436.1 174.0 L437.7 172.4 L435.5 170.8 L434.9 169.2 L435.2 167.6 L434.2 166.0 L436.8 164.4 L435.1 162.8 L434.5 161.2 L435.8 159.6 L438.0 158.0 L438.2 156.4 L438.6 154.8 L436.5 153.2 L435.7 151.6 L434.2 150.0 L435.5 148.4 L435.3 146.8 L434.3 145.2 L436.2 143.6 L435.8 142.0 L434.6 140.4 L435.2 138.8 L436.3 137.2 L435.6 135.6 L435.2 134.0 L433.1 132.4 L434.7 130.8 L435.1 129.2 L434.2 127.6 L433.6 126.0 L436.1 124.4 L435.6 122.8 L437.1 121.1 L437.3 119.5 L436.9 117.9 L437.3 116.3 L435.7 114.7 L436.6 113.1 L435.3 111.5 L435.6 109.9 L435.5 108.3 L435.5 106.7 L437.3 105.1 L436.1 103.5 L436.5 101.9 L437.8 100.3 L437.8 98.7 L437.1 97.1 L437.8 95.5 L439.0 93.9 L438.5 92.3 L437.9 90.7 L435.5 89.1 L435.5 87.5 L435.7 85.9 L434.9 84.3 L435.1 82.7 L434.7 81.1 L436.2 79.5 L434.6 77.9 L434.7 76.3 L434.7 74.7 L434.5 73.1 L435.5 71.5 L435.7 69.9 L435.5 68.3 L437.4 66.7 L435.5 65.1 L435.1 63.5 L435.6 61.9 L433.9 60.3 L436.1 58.7 L436.0 57.0 L436.0 55.4 L435.3 53.8 L437.5 52.2 L437.4 50.6 L435.1 49.0 L434.4 47.4 L434.2 45.8 L434.2 44.2 L437.0 42.6 L437.1 41.0 L437.3 39.4 L435.0 37.8 L437.2 36.2 L436.4 34.6 L436.9 33.0 L437.6 31.4 L435.9 29.8 L436.7 28.2 L435.6 26.6 L436.0 25.0 Z" fill="url(#treeg)" filter="url(#b1)"/>
<circle cx="354.2" cy="55.1" r="0.33" fill="#5a6a80" opacity="0.36"/>
<circle cx="411.1" cy="197.1" r="0.61" fill="#5a6a80" opacity="0.29"/>
<circle cx="369.5" cy="81.9" r="0.37" fill="#5a6a80" opacity="0.24"/>
<circle cx="401.4" cy="198.5" r="0.62" fill="#5a6a80" opacity="0.28"/>
<circle cx="344.8" cy="158.9" r="0.59" fill="#5a6a80" opacity="0.54"/>
<circle cx="406.9" cy="40.1" r="0.54" fill="#5a6a80" opacity="0.47"/>
<circle cx="366.1" cy="60.1" r="0.49" fill="#5a6a80" opacity="0.24"/>
<circle cx="412.9" cy="211.4" r="0.52" fill="#5a6a80" opacity="0.32"/>
<circle cx="410.1" cy="146.9" r="0.65" fill="#5a6a80" opacity="0.54"/>
<circle cx="366.4" cy="112.1" r="0.54" fill="#5a6a80" opacity="0.37"/>
<circle cx="328.6" cy="88.1" r="0.63" fill="#5a6a80" opacity="0.22"/>
<circle cx="341.6" cy="138.6" r="0.49" fill="#5a6a80" opacity="0.34"/>
<circle cx="419.7" cy="64.0" r="0.47" fill="#5a6a80" opacity="0.28"/>
<circle cx="380.0" cy="81.8" r="0.44" fill="#5a6a80" opacity="0.50"/>
<circle cx="346.0" cy="143.9" r="0.66" fill="#5a6a80" opacity="0.24"/>
<circle cx="317.7" cy="71.4" r="0.61" fill="#5a6a80" opacity="0.45"/>
<circle cx="336.9" cy="93.8" r="0.37" fill="#5a6a80" opacity="0.38"/>
<circle cx="408.7" cy="231.0" r="0.59" fill="#5a6a80" opacity="0.58"/>
<circle cx="416.3" cy="191.6" r="0.46" fill="#5a6a80" opacity="0.58"/>
<circle cx="378.6" cy="200.9" r="0.42" fill="#5a6a80" opacity="0.28"/>
<circle cx="359.4" cy="51.0" r="0.45" fill="#5a6a80" opacity="0.58"/>
<circle cx="396.4" cy="100.8" r="0.42" fill="#5a6a80" opacity="0.24"/>
<circle cx="418.0" cy="114.3" r="0.38" fill="#5a6a80" opacity="0.22"/>
<circle cx="384.8" cy="53.9" r="0.32" fill="#5a6a80" opacity="0.40"/>
<circle cx="324.3" cy="137.4" r="0.61" fill="#5a6a80" opacity="0.36"/>
<circle cx="418.7" cy="126.1" r="0.40" fill="#5a6a80" opacity="0.36"/>
<circle cx="315.0" cy="113.7" r="0.40" fill="#5a6a80" opacity="0.56"/>
<circle cx="401.6" cy="130.7" r="0.31" fill="#5a6a80" opacity="0.30"/>
<circle cx="337.4" cy="66.8" r="0.39" fill="#5a6a80" opacity="0.55"/>
<circle cx="412.2" cy="145.4" r="0.70" fill="#5a6a80" opacity="0.36"/>
<circle cx="409.2" cy="164.9" r="0.62" fill="#5a6a80" opacity="0.50"/>
<circle cx="364.9" cy="41.4" r="0.38" fill="#5a6a80" opacity="0.55"/>
<circle cx="409.1" cy="224.4" r="0.43" fill="#5a6a80" opacity="0.46"/>
<circle cx="398.1" cy="162.3" r="0.63" fill="#5a6a80" opacity="0.41"/>
<circle cx="382.4" cy="171.9" r="0.41" fill="#5a6a80" opacity="0.57"/>
<circle cx="415.2" cy="37.4" r="0.69" fill="#5a6a80" opacity="0.58"/>
<circle cx="383.9" cy="30.8" r="0.66" fill="#5a6a80" opacity="0.25"/>
<circle cx="416.6" cy="167.8" r="0.32" fill="#5a6a80" opacity="0.27"/>
<circle cx="380.2" cy="146.2" r="0.60" fill="#5a6a80" opacity="0.57"/>
<circle cx="411.5" cy="23.9" r="0.65" fill="#5a6a80" opacity="0.25"/>
<circle cx="399.3" cy="193.3" r="0.65" fill="#5a6a80" opacity="0.42"/>
<circle cx="406.8" cy="65.4" r="0.57" fill="#5a6a80" opacity="0.33"/>
<circle cx="408.2" cy="191.2" r="0.49" fill="#5a6a80" opacity="0.41"/>
<circle cx="375.8" cy="128.5" r="0.65" fill="#5a6a80" opacity="0.44"/>
<circle cx="326.1" cy="100.8" r="0.61" fill="#5a6a80" opacity="0.41"/>
<circle cx="401.2" cy="39.7" r="0.52" fill="#5a6a80" opacity="0.35"/>
<circle cx="396.8" cy="89.5" r="0.39" fill="#5a6a80" opacity="0.39"/>
<circle cx="416.3" cy="41.9" r="0.35" fill="#5a6a80" opacity="0.45"/>
<circle cx="407.5" cy="133.7" r="0.47" fill="#5a6a80" opacity="0.54"/>
<circle cx="395.6" cy="35.7" r="0.65" fill="#5a6a80" opacity="0.28"/>
<circle cx="344.0" cy="205.0" r="0.47" fill="#5a6a80" opacity="0.52"/>
<circle cx="330.2" cy="53.8" r="0.50" fill="#5a6a80" opacity="0.34"/>
<circle cx="370.1" cy="219.9" r="0.58" fill="#5a6a80" opacity="0.20"/>
<circle cx="345.0" cy="140.9" r="0.49" fill="#5a6a80" opacity="0.49"/>
<circle cx="349.9" cy="189.7" r="0.69" fill="#5a6a80" opacity="0.45"/>
<circle cx="384.8" cy="155.1" r="0.43" fill="#5a6a80" opacity="0.57"/>
<circle cx="361.9" cy="221.5" r="0.42" fill="#5a6a80" opacity="0.55"/>
<circle cx="396.8" cy="155.9" r="0.48" fill="#5a6a80" opacity="0.26"/>
<circle cx="395.0" cy="100.7" r="0.56" fill="#5a6a80" opacity="0.25"/>
<circle cx="399.2" cy="60.1" r="0.66" fill="#5a6a80" opacity="0.35"/>
<circle cx="373.8" cy="98.1" r="0.55" fill="#5a6a80" opacity="0.24"/>
<circle cx="330.6" cy="164.9" r="0.43" fill="#5a6a80" opacity="0.32"/>
<circle cx="414.5" cy="203.6" r="0.62" fill="#5a6a80" opacity="0.52"/>
<circle cx="414.9" cy="55.9" r="0.53" fill="#5a6a80" opacity="0.40"/>
<circle cx="373.6" cy="227.3" r="0.60" fill="#5a6a80" opacity="0.59"/>
<circle cx="384.6" cy="184.9" r="0.55" fill="#5a6a80" opacity="0.53"/>
<circle cx="355.3" cy="152.8" r="0.66" fill="#5a6a80" opacity="0.48"/>
<circle cx="344.8" cy="71.7" r="0.43" fill="#5a6a80" opacity="0.45"/>
<circle cx="419.6" cy="218.8" r="0.46" fill="#5a6a80" opacity="0.36"/>
<circle cx="400.1" cy="83.4" r="0.46" fill="#5a6a80" opacity="0.21"/>
<circle cx="331.0" cy="139.8" r="0.58" fill="#5a6a80" opacity="0.45"/>
<circle cx="378.9" cy="55.3" r="0.33" fill="#5a6a80" opacity="0.59"/>
<circle cx="418.7" cy="223.4" r="0.54" fill="#5a6a80" opacity="0.32"/>
<circle cx="321.0" cy="77.7" r="0.39" fill="#5a6a80" opacity="0.57"/>
<circle cx="408.3" cy="192.1" r="0.36" fill="#5a6a80" opacity="0.30"/>
<circle cx="385.2" cy="141.4" r="0.68" fill="#5a6a80" opacity="0.30"/>
<circle cx="368.2" cy="55.7" r="0.34" fill="#5a6a80" opacity="0.21"/>
<circle cx="345.5" cy="47.8" r="0.32" fill="#5a6a80" opacity="0.60"/>
<circle cx="387.5" cy="181.9" r="0.56" fill="#5a6a80" opacity="0.58"/>
<circle cx="406.8" cy="179.3" r="0.52" fill="#5a6a80" opacity="0.48"/>
<circle cx="389.9" cy="142.5" r="0.50" fill="#5a6a80" opacity="0.26"/>
<circle cx="403.0" cy="127.5" r="0.33" fill="#5a6a80" opacity="0.27"/>
<circle cx="406.4" cy="77.3" r="0.46" fill="#5a6a80" opacity="0.47"/>
<circle cx="404.9" cy="93.3" r="0.45" fill="#5a6a80" opacity="0.37"/>
<circle cx="327.6" cy="55.5" r="0.64" fill="#5a6a80" opacity="0.53"/>
<circle cx="336.3" cy="142.8" r="0.49" fill="#5a6a80" opacity="0.49"/>
<circle cx="419.6" cy="176.4" r="0.67" fill="#5a6a80" opacity="0.57"/>
<circle cx="352.4" cy="207.5" r="0.63" fill="#5a6a80" opacity="0.43"/>
<circle cx="410.4" cy="88.1" r="0.56" fill="#5a6a80" opacity="0.56"/>
<circle cx="379.9" cy="77.2" r="0.64" fill="#5a6a80" opacity="0.46"/>
<circle cx="379.1" cy="95.6" r="0.63" fill="#5a6a80" opacity="0.56"/>
<circle cx="408.4" cy="215.3" r="0.56" fill="#5a6a80" opacity="0.48"/>
<circle cx="376.9" cy="137.0" r="0.69" fill="#5a6a80" opacity="0.34"/>
<circle cx="365.3" cy="141.0" r="0.54" fill="#5a6a80" opacity="0.30"/>
<circle cx="396.2" cy="220.9" r="0.58" fill="#5a6a80" opacity="0.25"/>
<circle cx="417.7" cy="202.9" r="0.50" fill="#5a6a80" opacity="0.20"/>
<circle cx="403.0" cy="158.1" r="0.55" fill="#5a6a80" opacity="0.21"/>
<circle cx="390.9" cy="28.5" r="0.49" fill="#5a6a80" opacity="0.26"/>
<circle cx="392.6" cy="200.5" r="0.42" fill="#5a6a80" opacity="0.36"/>
<circle cx="393.2" cy="210.8" r="0.42" fill="#5a6a80" opacity="0.48"/>
<circle cx="397.0" cy="176.0" r="0.47" fill="#5a6a80" opacity="0.27"/>
<circle cx="412.6" cy="81.7" r="0.60" fill="#5a6a80" opacity="0.36"/>
<circle cx="379.4" cy="206.2" r="0.43" fill="#5a6a80" opacity="0.45"/>
<circle cx="338.9" cy="133.4" r="0.31" fill="#5a6a80" opacity="0.31"/>
<circle cx="383.9" cy="216.9" r="0.50" fill="#5a6a80" opacity="0.25"/>
<circle cx="348.1" cy="121.2" r="0.70" fill="#5a6a80" opacity="0.27"/>
<circle cx="343.3" cy="145.8" r="0.56" fill="#5a6a80" opacity="0.56"/>
<circle cx="330.7" cy="66.4" r="0.31" fill="#5a6a80" opacity="0.33"/>
<circle cx="377.1" cy="101.1" r="0.70" fill="#5a6a80" opacity="0.27"/>
<circle cx="414.7" cy="171.5" r="0.69" fill="#5a6a80" opacity="0.22"/>
<circle cx="409.5" cy="176.0" r="0.57" fill="#5a6a80" opacity="0.54"/>
<circle cx="322.4" cy="64.9" r="0.36" fill="#5a6a80" opacity="0.39"/>
<circle cx="370.5" cy="139.9" r="0.44" fill="#5a6a80" opacity="0.50"/>
<circle cx="402.4" cy="187.9" r="0.32" fill="#5a6a80" opacity="0.26"/>
<circle cx="334.9" cy="73.4" r="0.53" fill="#5a6a80" opacity="0.28"/>
<circle cx="379.1" cy="96.7" r="0.45" fill="#5a6a80" opacity="0.48"/>
<circle cx="413.9" cy="62.9" r="0.44" fill="#5a6a80" opacity="0.59"/>
<circle cx="390.7" cy="227.5" r="0.50" fill="#5a6a80" opacity="0.22"/>
<circle cx="344.4" cy="179.2" r="0.46" fill="#5a6a80" opacity="0.26"/>
<circle cx="352.0" cy="123.0" r="0.44" fill="#5a6a80" opacity="0.38"/>
<circle cx="396.4" cy="182.1" r="0.47" fill="#5a6a80" opacity="0.25"/>
<circle cx="343.2" cy="143.8" r="0.66" fill="#5a6a80" opacity="0.39"/>
<circle cx="417.1" cy="136.9" r="0.37" fill="#5a6a80" opacity="0.45"/>
<circle cx="376.4" cy="152.8" r="0.59" fill="#5a6a80" opacity="0.21"/>
<circle cx="358.6" cy="197.1" r="0.36" fill="#5a6a80" opacity="0.22"/>
<circle cx="330.9" cy="83.8" r="0.47" fill="#5a6a80" opacity="0.33"/>
<circle cx="380.1" cy="58.4" r="0.44" fill="#5a6a80" opacity="0.47"/>
<circle cx="370.3" cy="231.9" r="0.67" fill="#5a6a80" opacity="0.30"/>
<circle cx="347.5" cy="139.3" r="0.52" fill="#5a6a80" opacity="0.35"/>
<circle cx="405.0" cy="64.3" r="0.49" fill="#5a6a80" opacity="0.25"/>
<circle cx="407.3" cy="152.0" r="0.70" fill="#5a6a80" opacity="0.26"/>
<circle cx="388.5" cy="152.3" r="0.32" fill="#5a6a80" opacity="0.53"/>
<circle cx="406.3" cy="38.7" r="0.68" fill="#5a6a80" opacity="0.51"/>
<circle cx="376.9" cy="140.6" r="0.41" fill="#5a6a80" opacity="0.22"/>
<circle cx="362.8" cy="211.5" r="0.38" fill="#5a6a80" opacity="0.39"/>
<circle cx="341.8" cy="173.0" r="0.68" fill="#5a6a80" opacity="0.56"/>
<circle cx="342.4" cy="112.7" r="0.30" fill="#5a6a80" opacity="0.41"/>
<circle cx="404.0" cy="206.9" r="0.33" fill="#5a6a80" opacity="0.37"/>
<circle cx="319.7" cy="114.4" r="0.67" fill="#5a6a80" opacity="0.31"/>
<circle cx="403.2" cy="231.2" r="0.63" fill="#5a6a80" opacity="0.28"/>
<circle cx="411.1" cy="224.0" r="0.70" fill="#5a6a80" opacity="0.20"/>
<circle cx="367.4" cy="114.3" r="0.34" fill="#5a6a80" opacity="0.46"/>
<circle cx="383.8" cy="159.7" r="0.50" fill="#5a6a80" opacity="0.42"/>
<circle cx="386.2" cy="35.2" r="0.47" fill="#5a6a80" opacity="0.25"/>
<circle cx="346.4" cy="95.7" r="0.41" fill="#5a6a80" opacity="0.43"/>
<circle cx="370.4" cy="114.5" r="0.42" fill="#5a6a80" opacity="0.34"/>
<circle cx="393.7" cy="136.4" r="0.51" fill="#5a6a80" opacity="0.30"/>
<circle cx="379.1" cy="58.5" r="0.49" fill="#5a6a80" opacity="0.46"/>
<circle cx="370.3" cy="148.7" r="0.53" fill="#5a6a80" opacity="0.28"/>
<circle cx="415.4" cy="171.4" r="0.59" fill="#5a6a80" opacity="0.58"/>
<circle cx="360.2" cy="94.2" r="0.42" fill="#5a6a80" opacity="0.33"/>
<circle cx="343.7" cy="90.5" r="0.38" fill="#5a6a80" opacity="0.39"/>
<circle cx="342.8" cy="102.1" r="0.57" fill="#5a6a80" opacity="0.33"/>
<circle cx="405.1" cy="196.5" r="0.43" fill="#5a6a80" opacity="0.53"/>
<circle cx="419.4" cy="28.2" r="0.30" fill="#5a6a80" opacity="0.55"/>
<circle cx="371.6" cy="70.0" r="0.40" fill="#5a6a80" opacity="0.59"/>
<circle cx="353.9" cy="74.2" r="0.48" fill="#5a6a80" opacity="0.49"/>
<circle cx="397.2" cy="42.1" r="0.32" fill="#5a6a80" opacity="0.20"/>
<circle cx="419.3" cy="116.5" r="0.59" fill="#5a6a80" opacity="0.42"/>
<circle cx="417.3" cy="96.5" r="0.44" fill="#5a6a80" opacity="0.47"/>
<circle cx="393.8" cy="147.0" r="0.50" fill="#5a6a80" opacity="0.57"/>
<circle cx="358.2" cy="181.8" r="0.46" fill="#5a6a80" opacity="0.23"/>
<circle cx="353.2" cy="67.4" r="0.31" fill="#5a6a80" opacity="0.31"/>
<circle cx="324.8" cy="121.4" r="0.60" fill="#5a6a80" opacity="0.50"/>
<circle cx="407.3" cy="90.9" r="0.57" fill="#5a6a80" opacity="0.56"/>
<circle cx="407.0" cy="236.6" r="0.63" fill="#5a6a80" opacity="0.48"/>
<circle cx="358.4" cy="178.8" r="0.65" fill="#5a6a80" opacity="0.43"/>
<circle cx="378.8" cy="224.4" r="0.41" fill="#5a6a80" opacity="0.33"/>
<circle cx="379.6" cy="169.0" r="0.40" fill="#5a6a80" opacity="0.27"/>
<circle cx="363.2" cy="214.0" r="0.44" fill="#5a6a80" opacity="0.37"/>
<circle cx="356.5" cy="206.8" r="0.35" fill="#5a6a80" opacity="0.55"/>
<circle cx="394.2" cy="124.3" r="0.60" fill="#5a6a80" opacity="0.31"/>
<circle cx="326.4" cy="100.2" r="0.41" fill="#5a6a80" opacity="0.49"/>
<circle cx="372.5" cy="166.4" r="0.69" fill="#5a6a80" opacity="0.51"/>
<circle cx="397.3" cy="234.4" r="0.67" fill="#5a6a80" opacity="0.50"/>
<circle cx="348.9" cy="132.8" r="0.60" fill="#5a6a80" opacity="0.51"/>
<circle cx="409.1" cy="184.3" r="0.57" fill="#5a6a80" opacity="0.30"/>
<circle cx="378.8" cy="62.1" r="0.56" fill="#5a6a80" opacity="0.27"/>
<circle cx="405.8" cy="88.1" r="0.32" fill="#5a6a80" opacity="0.53"/>
<circle cx="395.1" cy="55.1" r="0.63" fill="#5a6a80" opacity="0.54"/>
<circle cx="373.6" cy="81.3" r="0.32" fill="#5a6a80" opacity="0.23"/>
<circle cx="359.1" cy="179.7" r="0.56" fill="#5a6a80" opacity="0.29"/>
<circle cx="398.0" cy="34.9" r="0.55" fill="#5a6a80" opacity="0.27"/>
<circle cx="397.7" cy="69.4" r="0.31" fill="#5a6a80" opacity="0.39"/>
<circle cx="349.0" cy="147.3" r="0.53" fill="#5a6a80" opacity="0.48"/>
<circle cx="410.8" cy="95.4" r="0.55" fill="#5a6a80" opacity="0.25"/>
<circle cx="405.0" cy="95.3" r="0.58" fill="#5a6a80" opacity="0.55"/>
<circle cx="352.9" cy="66.5" r="0.40" fill="#5a6a80" opacity="0.40"/>
<circle cx="403.7" cy="161.7" r="0.65" fill="#5a6a80" opacity="0.54"/>
<circle cx="390.1" cy="202.3" r="0.58" fill="#5a6a80" opacity="0.37"/>
<circle cx="400.2" cy="222.9" r="0.34" fill="#5a6a80" opacity="0.26"/>
<path d="M332.0 272.0 C333.0 261.0 337.0 250.0 346.0 246.0 C354.0 243.0 362.0 243.0 368.0 246.0 L373.0 275.0 L332.0 275.0 Z" fill="#182a1a"/>
<path d="M335.0 265.0 C338.0 255.0 343.0 249.0 352.0 246.0 L352.0 255.0 Z" fill="#2e4a2c" opacity="0.6" filter="url(#b1)"/>
<path d="M18.0 46.0 C22.0 53.0 23.0 63.0 23.0 73.0 C24.0 79.0 25.0 84.0 26.0 88.0" stroke="#c05868" stroke-width="0.7" opacity="0.95" fill="none"/>
<text x="129" y="33" font-family="Liberation Sans" font-size="3.7" letter-spacing="0.25" fill="#26304a">phoronix</text>
<rect x="50" y="58.5" width="138" height="70.5" fill="#ffffff" fill-opacity="0.05" stroke="#ffffff" stroke-opacity="0.95" stroke-width="0.6" stroke-dasharray="0.7 1.3"/>
<circle cx="50" cy="58.5" r="1.5" fill="#1426cc"/>
<circle cx="50" cy="93.80000000000001" r="1.5" fill="#1426cc"/>
<circle cx="50" cy="129" r="1.5" fill="#1426cc"/>
<circle cx="119" cy="58.5" r="1.5" fill="#1426cc"/>
<circle cx="119" cy="129" r="1.5" fill="#1426cc"/>
<circle cx="188" cy="58.5" r="1.5" fill="#1426cc"/>
<circle cx="188" cy="93.80000000000001" r="1.5" fill="#1426cc"/>
<circle cx="188" cy="129" r="1.5" fill="#1426cc"/>
</svg>
<!-- UI -->
<div class="t" style="left:225.5px;width:200px;text-align:center;top:3.00px;font-size:5.0px;font-weight:700;color:#ffffff;">Apr 13&nbsp;&nbsp; 5:16 AM</div>
<div class="a" style="left:5px;top:4px;width:10px;height:3px;background:#ffffff;border-radius:2px"></div>
<div class="a" style="left:17.5px;top:4.8px;width:1.6px;height:1.6px;background:#cfcfcf;border-radius:1px"></div>
<svg class="a" style="left:619px;top:1px" width="30" height="9" viewBox="0 0 30 9"><g fill="#fff" stroke="#fff">
<rect x="3" y="1" width="2" height="2" stroke="none"/><rect x="0.5" y="6" width="2" height="2" stroke="none"/><rect x="5.5" y="6" width="2" height="2" stroke="none"/>
<path d="M4 3 V4.5 M1.5 6 V4.5 H6.5 V6" fill="none" stroke-width="0.7"/>
<path d="M11 3.5 H12.5 L14.5 2 V7.5 L12.5 6 H11 Z" stroke="none"/>
<path d="M15.6 3.2 Q16.6 4.75 15.6 6.3" fill="none" stroke-width="0.6"/>
<circle cx="23" cy="4.75" r="2.6" fill="none" stroke-width="0.8"/><path d="M23 1.5 V4.5" stroke="#000" stroke-width="1.6"/><path d="M23 1.6 V4.4" stroke-width="0.8"/>
</g></svg>
<div class="t" style="left:266.0px;width:200px;text-align:center;top:34.00px;font-size:5.27px;font-weight:400;color:#bdbdbd;width:300px;margin-left:-50px">phoronix@fedora:~/phoronix-test-suite — /usr/bin/bwrap --args 39 -- pinta</div>
<div class="t" style="left:266.5px;width:200px;text-align:center;top:42.00px;font-size:4.4px;font-weight:400;color:#707070;">phoronix@fedora:~</div>
<svg class="a" style="left:106px;top:34px" width="8" height="8" viewBox="0 0 8 8"><rect x="1" y="1" width="6" height="6" rx="0.8" fill="none" stroke="#aaa" stroke-width="0.7"/><path d="M3 4 H5 M4 3 V5" stroke="#aaa" stroke-width="0.6"/></svg>
<svg class="a" style="left:590px;top:35px" width="40" height="8" viewBox="0 0 40 8"><g fill="#aaa"><rect x="2" y="1" width="2.2" height="2.2"/><rect x="5" y="1" width="2.2" height="2.2"/><rect x="2" y="4.2" width="2.2" height="2.2"/><rect x="5" y="4.2" width="2.2" height="2.2"/>
<rect x="16.5" y="1.3" width="6" height="0.8"/><rect x="16.5" y="3.4" width="6" height="0.8"/><rect x="16.5" y="5.5" width="6" height="0.8"/></g>
<path d="M31.7 2.5 L34 4.8 M34 2.5 L31.7 4.8" stroke="#999" stroke-width="0.7"/></svg>
<div class="t" style="left:233.3px;width:200px;text-align:center;top:57.00px;font-size:4.84px;font-weight:700;color:#2e2e2e;">DSC_6782.png* - Pinta</div>
<svg class="a" style="left:45px;top:54px" width="150" height="9" viewBox="0 0 150 9"><g fill="none" stroke="#2e2e2e" stroke-width="0.75">
<path d="M2.5 1.2 H5.6 L7 2.6 V7.6 H2.5 Z"/><path d="M6 5.5 H8 M7 4.5 V6.5" stroke-width="0.6"/>
<path d="M15.8 7.4 V3 H18 L18.6 2 H21.5 V7.4 Z"/><path d="M16.6 7.4 L17.6 4.6 H22.5 L21.5 7.4" />
<path d="M31.7 1.5 V5.6 M29.8 3.8 L31.7 5.6 L33.6 3.8 M29.3 7.5 H34.1"/>
<path d="M51 3 L49.2 4.6 L51 6.2 M49.4 4.6 H53.4 Q54.9 4.6 54.9 6.2 V7"/>
<path d="M66.9 3 L68.7 4.6 L66.9 6.2 M68.5 4.6 H64.5 Q63 4.6 63 6.2 V7" stroke="#bdbdbd"/>
<path d="M83.2 1.6 L86 6 M86.6 1.6 L83.8 6"/><circle cx="83.5" cy="6.8" r="0.9"/><circle cx="86.3" cy="6.8" r="0.9"/>
<rect x="95.4" y="2" width="3.8" height="3.8" rx="0.6"/><rect x="97.2" y="3.8" width="3.8" height="3.8" rx="0.6"/>
<rect x="109.3" y="2.2" width="4.5" height="5.4" rx="0.6"/><path d="M110.4 1.6 H112.7 V2.6 H110.4Z" fill="#2e2e2e"/>
<path d="M129.5 1.8 V6.2 H134 M128.3 3 H132.8 V7.5" stroke-width="0.65"/>
<path d="M142.5 2 L146 7.2 M143 5 H145.5 M145 2 L143.5 3.5" stroke-width="0.65"/>
</g></svg>
<svg class="a" style="left:558px;top:54px" width="50" height="9" viewBox="0 0 50 9"><g fill="none" stroke="#2e2e2e" stroke-width="0.7">
<rect x="2.4" y="1.6" width="5.4" height="5.4" rx="0.8"/><path d="M3.6 5.6 H6.6" />
<circle cx="18.6" cy="4.3" r="2.6"/><path d="M18.6 1.7 V6.9 A2.6 2.6 0 0 0 18.6 1.7Z" fill="#2e2e2e" stroke="none"/>
<rect x="29.6" y="2.0" width="4.6" height="4.8" rx="0.5"/><path d="M31.9 2.0 V6.8 H34.2 V2.0Z" fill="#2e2e2e" stroke="none"/>
</g>
<g fill="#2e2e2e"><rect x="42.7" y="2.0" width="6" height="0.75"/><rect x="42.7" y="4.0" width="6" height="0.75"/><rect x="42.7" y="6.0" width="6" height="0.75"/></g></svg>
<div class="a" style="left:612.3px;top:53px;width:10px;height:10px;background:#ebebeb;border-radius:5px"></div>
<svg class="a" style="left:612.3px;top:53px" width="10" height="10" viewBox="0 0 10 10"><path d="M3.3 3.3 L6.7 6.7 M6.7 3.3 L3.3 6.7" stroke="#2e2e2e" stroke-width="0.85"/></svg>
<div class="t" style="left:45.5px;top:73.00px;font-size:4.85px;font-weight:400;color:#4a4a4a;">Tool:</div>
<svg class="a" style="left:59px;top:70px" width="8" height="8" viewBox="0 0 8 8"><rect x="1.6" y="1.6" width="4.8" height="4.2" rx="0.6" fill="none" stroke="#555" stroke-width="0.6"/></svg>
<div class="t" style="left:75.3px;top:73.00px;font-size:4.85px;font-weight:400;color:#4a4a4a;">Selection Mode:</div>
<div class="a" style="left:112px;top:67px;width:73px;height:13px;background:#e6e6e6;border-radius:3px"></div>
<div class="t" style="left:116.0px;top:73.00px;font-size:4.6px;font-weight:700;color:#2e2e2e;">Replace</div>
<svg class="a" style="left:176px;top:71px" width="6" height="5" viewBox="0 0 6 5"><path d="M0.8 1.2 H5.2 L3 3.6Z" fill="#2e2e2e"/></svg>
<div class="t" style="left:87.5px;width:200px;text-align:center;top:89.00px;font-size:4.75px;font-weight:400;color:#3a3a3a;">Unsaved Image 1</div>
<div class="a" style="left:305px;top:84px;width:236px;height:11.5px;background:#e6e6e6;border-radius:3px"></div>
<div class="t" style="left:322.6px;width:200px;text-align:center;top:89.00px;font-size:4.7px;font-weight:400;color:#2e2e2e;">DSC_6782.png*</div>
<svg class="a" style="left:531px;top:87px" width="6" height="6" viewBox="0 0 6 6"><path d="M1.4 1.4 L4.6 4.6 M4.6 1.4 L1.4 4.6" stroke="#2e2e2e" stroke-width="0.8"/></svg>
<div class="a" style="left:541px;top:80px;width:84px;height:277px;background:#ffffff;"></div>
<div class="a" style="left:540.5px;top:80px;width:0.8px;height:278px;background:#e2e2e2;"></div>
<div class="t" style="left:545.0px;top:87.00px;font-size:4.7px;font-weight:400;color:#555;">Layers</div>
<div class="a" style="left:617.5px;top:87.5px;width:4px;height:0.75px;background:#333;"></div>
<div class="a" style="left:541px;top:94px;width:82px;height:15.5px;background:#d2e0f2;"></div>
<svg class="a" style="left:543.5px;top:94.8px" width="19.5" height="13" viewBox="0 0 19.5 13"><defs><linearGradient id="th" x1="0" y1="0" x2="1" y2="0"><stop offset="0" stop-color="#6a8cb8"/><stop offset="1" stop-color="#a8ccf4"/></linearGradient></defs>
<rect width="19.5" height="13" fill="url(#th)"/><rect x="0" y="6" width="15" height="3.5" fill="#5a6e90" opacity="0.6"/><rect x="0" y="9.5" width="19.5" height="3.5" fill="#3a4a60"/><path d="M14.5 13 L14.6 4 L15.6 2.4 L17.6 1.4 L19.5 1.6 V13Z" fill="#111a20"/><rect x="0" y="8.2" width="8" height="4.8" fill="#0e1210"/><rect x="11.4" y="3.5" width="0.7" height="6.5" fill="#485870"/><rect x="10.9" y="5.4" width="1.7" height="1.4" fill="#506482"/></svg>
<div class="t" style="left:566.0px;top:101.00px;font-size:4.7px;font-weight:400;color:#2e2e2e;">DSC_6782.png</div>
<svg class="a" style="left:614px;top:97px" width="10" height="10" viewBox="0 0 10 10"><circle cx="5" cy="5" r="3.6" fill="#3584e4"/><path d="M3.3 5.1 L4.6 6.3 L6.9 3.8" stroke="#fff" stroke-width="0.8" fill="none"/></svg>
<svg class="a" style="left:545px;top:164px" width="78" height="10" viewBox="0 0 78 10"><g fill="none" stroke="#2e2e2e" stroke-width="0.6" opacity="0.85">
<rect x="2.5" y="2.6" width="4.2" height="4.2" rx="0.6"/><rect x="3.6" y="1.6" width="4.2" height="4.2" rx="0.6"/>
<rect x="16" y="2.6" width="4.2" height="4.2" rx="0.6"/><rect x="17.1" y="1.6" width="4.2" height="4.2" rx="0.6"/>
<rect x="29.6" y="2.4" width="3.8" height="4.8" rx="0.5"/><rect x="30.8" y="1.5" width="3.8" height="4.8" rx="0.5"/>
<path d="M43.5 2.2 L45.3 4.4 L47.1 2.2 M45.3 4.4 V7"/>
<path d="M56.7 2.6 H61.1 M56.7 4.4 H61.1 M56.7 6.2 H61.1 M58.9 1.8 V3"/>
<path d="M70.5 2.6 H74.9 M70.5 4.4 H74.9 M70.5 6.2 H74.9 M72.7 5.6 V7"/>
</g></svg>
<div class="a" style="left:541px;top:178.5px;width:82px;height:8px;background:#f7f7f7;"></div>
<div class="t" style="left:544.5px;top:182.00px;font-size:4.7px;font-weight:400;color:#555;">History</div>
<div class="a" style="left:617.5px;top:182.8px;width:4px;height:0.75px;background:#333;"></div>
<div class="a" style="left:541px;top:223.6px;width:82px;height:8.6px;background:#d2e0f2;"></div>
<div class="t" style="left:551.0px;top:192.00px;font-size:4.8px;font-weight:400;color:#2e2e2e;">Open Image</div>
<div class="t" style="left:551.0px;top:201.00px;font-size:4.8px;font-weight:400;color:#2e2e2e;">Text</div>
<div class="t" style="left:551.0px;top:210.00px;font-size:4.8px;font-weight:400;color:#2e2e2e;">Text - Finalize</div>
<div class="t" style="left:551.0px;top:218.00px;font-size:4.8px;font-weight:400;color:#2e2e2e;">Paintbrush</div>
<div class="t" style="left:551.0px;top:227.00px;font-size:4.8px;font-weight:400;color:#2e2e2e;">Rectangle Select</div>
<svg class="a" style="left:542px;top:189px" width="8" height="44" viewBox="0 0 8 44"><g fill="none" stroke="#2e2e2e" stroke-width="0.6">
<path d="M1.2 5.8 V2.4 H3.2 L3.8 1.7 H5.8 V5.8Z"/><path d="M1.7 5.8 L2.5 3.6 H6.6 L5.8 5.8"/>
</g>
<g fill="#2e2e2e"><path d="M1.3 10.5 H4.3 V11.2 H3.2 V14 H2.4 V11.2 H1.3Z"/><path d="M4.6 12 H6.4 V12.5 H5.8 V14 H5.2 V12.5 H4.6Z"/>
<path d="M1.3 19.1 H4.3 V19.8 H3.2 V22.6 H2.4 V19.8 H1.3Z"/><path d="M4.6 20.6 H6.4 V21.1 H5.8 V22.6 H5.2 V21.1 H4.6Z"/></g>
<path d="M1.8 31.6 L5.8 27.8" stroke="#2e2e2e" stroke-width="0.9"/>
<rect x="1.2" y="36.8" width="5.6" height="4" fill="none" stroke="#555" stroke-width="0.5"/></svg>
<svg class="a" style="left:545px;top:358px" width="24" height="9" viewBox="0 0 24 9"><g fill="none" stroke-width="0.7"><path d="M3.8 2.4 L2.2 3.8 L3.8 5.2 M2.4 3.8 H6 Q7.4 3.8 7.4 5.4 V6.2" stroke="#2e2e2e"/>
<path d="M18.6 2.4 L20.2 3.8 L18.6 5.2 M20 3.8 H16.4 Q15 3.8 15 5.4 V6.2" stroke="#c4c4c4"/></g></svg>
<svg class="a" style="left:447px;top:375px" width="8" height="8" viewBox="0 0 8 8"><path d="M2.2 1.8 L6 4.4 L4.4 4.8 L5.4 6.6 L4.6 7 L3.6 5.2 L2.4 6.2Z" fill="#2e2e2e"/></svg>
<div class="t" style="left:459.0px;top:379.00px;font-size:4.7px;font-weight:400;color:#444;">1873, 872</div>
<svg class="a" style="left:487px;top:375px" width="8" height="8" viewBox="0 0 8 8"><rect x="1.4" y="1.6" width="4.6" height="4.6" fill="none" stroke="#444" stroke-width="0.6"/></svg>
<div class="t" style="left:497.0px;top:379.00px;font-size:4.7px;font-weight:400;color:#444;">1268, 649</div>
<div class="a" style="left:531px;top:379.2px;width:4px;height:0.8px;background:#333;"></div>
<div class="a" style="left:541.5px;top:372px;width:68px;height:14px;background:#e6e6e6;border-radius:3px"></div>
<div class="t" style="left:544.0px;top:379.00px;font-size:4.7px;font-weight:400;color:#2e2e2e;">32%</div>
<svg class="a" style="left:600px;top:376.5px" width="6" height="5" viewBox="0 0 6 5"><path d="M0.8 1.2 H5.2 L3 3.6Z" fill="#2e2e2e"/></svg>
<svg class="a" style="left:613.5px;top:375px" width="8" height="8" viewBox="0 0 8 8"><path d="M4 1.8 V6.2 M1.8 4 H6.2" stroke="#2e2e2e" stroke-width="0.8"/></svg>
<div class="a" style="left:45.5px;top:373.5px;width:7.5px;height:7.5px;background:#ff0000;border:0.5px solid #555"></div>
<div class="a" style="left:49.5px;top:377px;width:7.5px;height:7.5px;background:#ffffff;border:0.5px solid #555;z-index:0"></div>
<div class="a" style="left:45.5px;top:373.5px;width:7.5px;height:7.5px;background:#ff0000;border:0.5px solid #444"></div>
<svg class="a" style="left:44px;top:381px" width="5" height="5" viewBox="0 0 5 5"><circle cx="2.5" cy="2.5" r="1.2" fill="#222"/></svg>
<svg class="a" style="left:53px;top:371px" width="5" height="5" viewBox="0 0 5 5"><path d="M1 3.6 Q1 1 3.6 1 M2.8 0.4 L3.8 1 L2.8 1.7" stroke="#333" stroke-width="0.5" fill="none"/></svg>
<div class="a" style="left:61px;top:373.5px;width:32px;height:12px;background:#e8e8e8;"></div>
<div class="a" style="left:61px;top:373.5px;width:6.2px;height:6.2px;background:#ff0000;"></div>
<svg class="a" style="left:96.5px;top:373.3px" width="109" height="12" viewBox="0 0 109 12"><rect x="0.00" y="0" width="6.45" height="6" fill="#ffffff"/><rect x="0.00" y="6" width="6.45" height="6" fill="#000000"/><rect x="6.40" y="0" width="6.45" height="6" fill="#a0a0a0"/><rect x="6.40" y="6" width="6.45" height="6" fill="#808080"/><rect x="12.80" y="0" width="6.45" height="6" fill="#404040"/><rect x="12.80" y="6" width="6.45" height="6" fill="#303030"/><rect x="19.20" y="0" width="6.45" height="6" fill="#ff0000"/><rect x="19.20" y="6" width="6.45" height="6" fill="#ff7f7f"/><rect x="25.60" y="0" width="6.45" height="6" fill="#ff6a00"/><rect x="25.60" y="6" width="6.45" height="6" fill="#ffb27f"/><rect x="32.00" y="0" width="6.45" height="6" fill="#ffd800"/><rect x="32.00" y="6" width="6.45" height="6" fill="#ffe97f"/><rect x="38.40" y="0" width="6.45" height="6" fill="#b6ff00"/><rect x="38.40" y="6" width="6.45" height="6" fill="#daff7f"/><rect x="44.80" y="0" width="6.45" height="6" fill="#4cff00"/><rect x="44.80" y="6" width="6.45" height="6" fill="#a5ff7f"/><rect x="51.20" y="0" width="6.45" height="6" fill="#00ff21"/><rect x="51.20" y="6" width="6.45" height="6" fill="#7fff8e"/><rect x="57.60" y="0" width="6.45" height="6" fill="#00ff90"/><rect x="57.60" y="6" width="6.45" height="6" fill="#7fffc5"/><rect x="64.00" y="0" width="6.45" height="6" fill="#00ffff"/><rect x="64.00" y="6" width="6.45" height="6" fill="#7fffff"/><rect x="70.40" y="0" width="6.45" height="6" fill="#0094ff"/><rect x="70.40" y="6" width="6.45" height="6" fill="#7fc9ff"/><rect x="76.80" y="0" width="6.45" height="6" fill="#0026ff"/><rect x="76.80" y="6" width="6.45" height="6" fill="#7f92ff"/><rect x="83.20" y="0" width="6.45" height="6" fill="#4800ff"/><rect x="83.20" y="6" width="6.45" height="6" fill="#a17fff"/><rect x="89.60" y="0" width="6.45" height="6" fill="#b200ff"/><rect x="89.60" y="6" width="6.45" height="6" fill="#d67fff"/><rect x="96.00" y="0" width="6.45" height="6" fill="#ff00dc"/><rect x="96.00" y="6" width="6.45" height="6" fill="#ff7fed"/><rect x="102.40" y="0" width="6.45" height="6" fill="#ff006e"/><rect x="102.40" y="6" width="6.45" height="6" fill="#ff7fb6"/></svg>
<div class="a" style="left:43.5px;top:137.7px;width:11px;height:10.5px;background:#e4e4e4;border-radius:2px"></div>
<svg class="a" style="left:44.5px;top:0px" width="9" height="406" viewBox="0 0 9 406"><g transform="translate(0,98.0)"><rect x="1.5" y="1.8" width="5" height="4.4" fill="none" stroke="#777" stroke-width="0.6"/><path d="M2.6 4 H5.4 M4 3 V5" stroke="#777" stroke-width="0.5"/></g><g transform="translate(0,111.6)"><circle cx="3.6" cy="3.6" r="1.6" fill="none" stroke="#2e2e2e" stroke-width="0.7"/><path d="M4.8 4.8 L6.6 6.6" stroke="#2e2e2e" stroke-width="0.8"/></g><g transform="translate(0,125.2)"><path d="M2.4 7 V3.4 Q2.4 2.6 3 2.6 V1.6 Q3.6 1 4.2 1.6 V2.4 Q4.8 1.8 5.4 2.4 V3 Q6 2.6 6.2 3.4 V5.6 Q6 7 5 7Z" fill="none" stroke="#2e2e2e" stroke-width="0.6"/></g><g transform="translate(0,138.7)"><rect x="1.6" y="2.3" width="4.8" height="3.6" rx="0.4" fill="none" stroke="#555" stroke-width="0.55"/></g><g transform="translate(0,152.2)"><ellipse cx="4" cy="4" rx="2.5" ry="2.3" fill="none" stroke="#555" stroke-width="0.55"/></g><g transform="translate(0,165.7)"><path d="M2 5.5 Q1.5 2 4.5 2 Q6.5 2.5 5.5 4.5 Q4 5.5 3 4 M3 5.6 L4.6 6.6" fill="none" stroke="#2e2e2e" stroke-width="0.6"/></g><g transform="translate(0,179.2)"><path d="M2 2 L6 6 M5 1.8 L3.2 3.6 M2.4 5 L1.8 6.4" stroke="#2e2e2e" stroke-width="0.6" fill="none"/><circle cx="5.8" cy="2.2" r="0.6" fill="#2e2e2e"/></g><g transform="translate(0,192.7)"><path d="M1.8 6.4 L5.8 2.2" stroke="#2e2e2e" stroke-width="0.9"/><circle cx="2" cy="6.2" r="0.8" fill="#2e2e2e"/></g><g transform="translate(0,206.2)"><path d="M2 6.2 L6 2.2" stroke="#2e2e2e" stroke-width="0.7"/><path d="M1.6 6.8 L2.6 5.6" stroke="#2e2e2e" stroke-width="1"/></g><g transform="translate(0,219.7)"><path d="M3.2 2 L6 4.8 L4.2 6.6 L1.4 3.8Z" fill="#2e2e2e"/><path d="M1.6 6.8 H6.4" stroke="#2e2e2e" stroke-width="0.5"/></g><g transform="translate(0,233.2)"><path d="M2.2 2 L5.5 2 L4 4 L5.8 6.6 H2.2Z" fill="none" stroke="#2e2e2e" stroke-width="0.6"/><path d="M1.6 6.8 H6.4" stroke="#2e2e2e" stroke-width="0.6"/></g><g transform="translate(0,246.7)"><rect x="1.6" y="1.8" width="4.8" height="4.4" fill="#2e2e2e"/><rect x="2.2" y="2.4" width="3.6" height="1.6" fill="#fff"/></g><g transform="translate(0,260.2)"><path d="M2 6.5 L5.6 2.2 L6.2 2.8 L2.8 6.8Z" fill="none" stroke="#2e2e2e" stroke-width="0.6"/></g><g transform="translate(0,273.7)"><path d="M2 2 H5 M2.8 2 V6.2 M4.4 4 H6 M5.2 4 V6.2" stroke="#2e2e2e" stroke-width="0.6"/></g><g transform="translate(0,287.2)"><path d="M1.8 6.4 L3.6 3.4 L5 5 L6.4 2" stroke="#2e2e2e" stroke-width="0.6" fill="none"/><circle cx="3.6" cy="3.4" r="0.6" fill="#2e2e2e"/><circle cx="1.8" cy="6.4" r="0.6" fill="#2e2e2e"/></g><g transform="translate(0,300.7)"><rect x="1.8" y="2" width="4.4" height="4.2" fill="none" stroke="#2e2e2e" stroke-width="0.6"/></g><g transform="translate(0,314.2)"><rect x="1.8" y="2" width="4.4" height="4.2" rx="1.2" fill="none" stroke="#2e2e2e" stroke-width="0.6"/></g><g transform="translate(0,327.7)"><ellipse cx="4" cy="4" rx="2.4" ry="2.4" fill="none" stroke="#2e2e2e" stroke-width="0.6"/></g><g transform="translate(0,341.2)"><path d="M2 6.4 L4.4 1.8 L6.2 6.4Z" fill="none" stroke="#2e2e2e" stroke-width="0.6"/></g><g transform="translate(0,354.8)"><circle cx="4" cy="3" r="1.1" fill="none" stroke="#2e2e2e" stroke-width="0.6"/><path d="M2 6.6 Q2 4.6 4 4.6 Q6 4.6 6 6.6Z" fill="#2e2e2e"/></g></svg>
<svg class="a" style="left:44.5px;top:84.9px" width="22" height="8" viewBox="0 0 22 8"><path d="M4 1 V7 M1 4 H7" stroke="#2e2e2e" stroke-width="0.6"/><path d="M3 2 L4 1 L5 2 M3 6 L4 7 L5 6 M2 3 L1 4 L2 5 M6 3 L7 4 L6 5" stroke="#2e2e2e" stroke-width="0.6" fill="none"/>
<path d="M14.5 6 L17.2 3.3" stroke="#2e2e2e" stroke-width="0.7"/><circle cx="17.6" cy="2.8" r="1" fill="none" stroke="#2e2e2e" stroke-width="0.6"/><circle cx="14.6" cy="6.2" r="0.7" fill="#2e2e2e"/></svg>
</body></html>
